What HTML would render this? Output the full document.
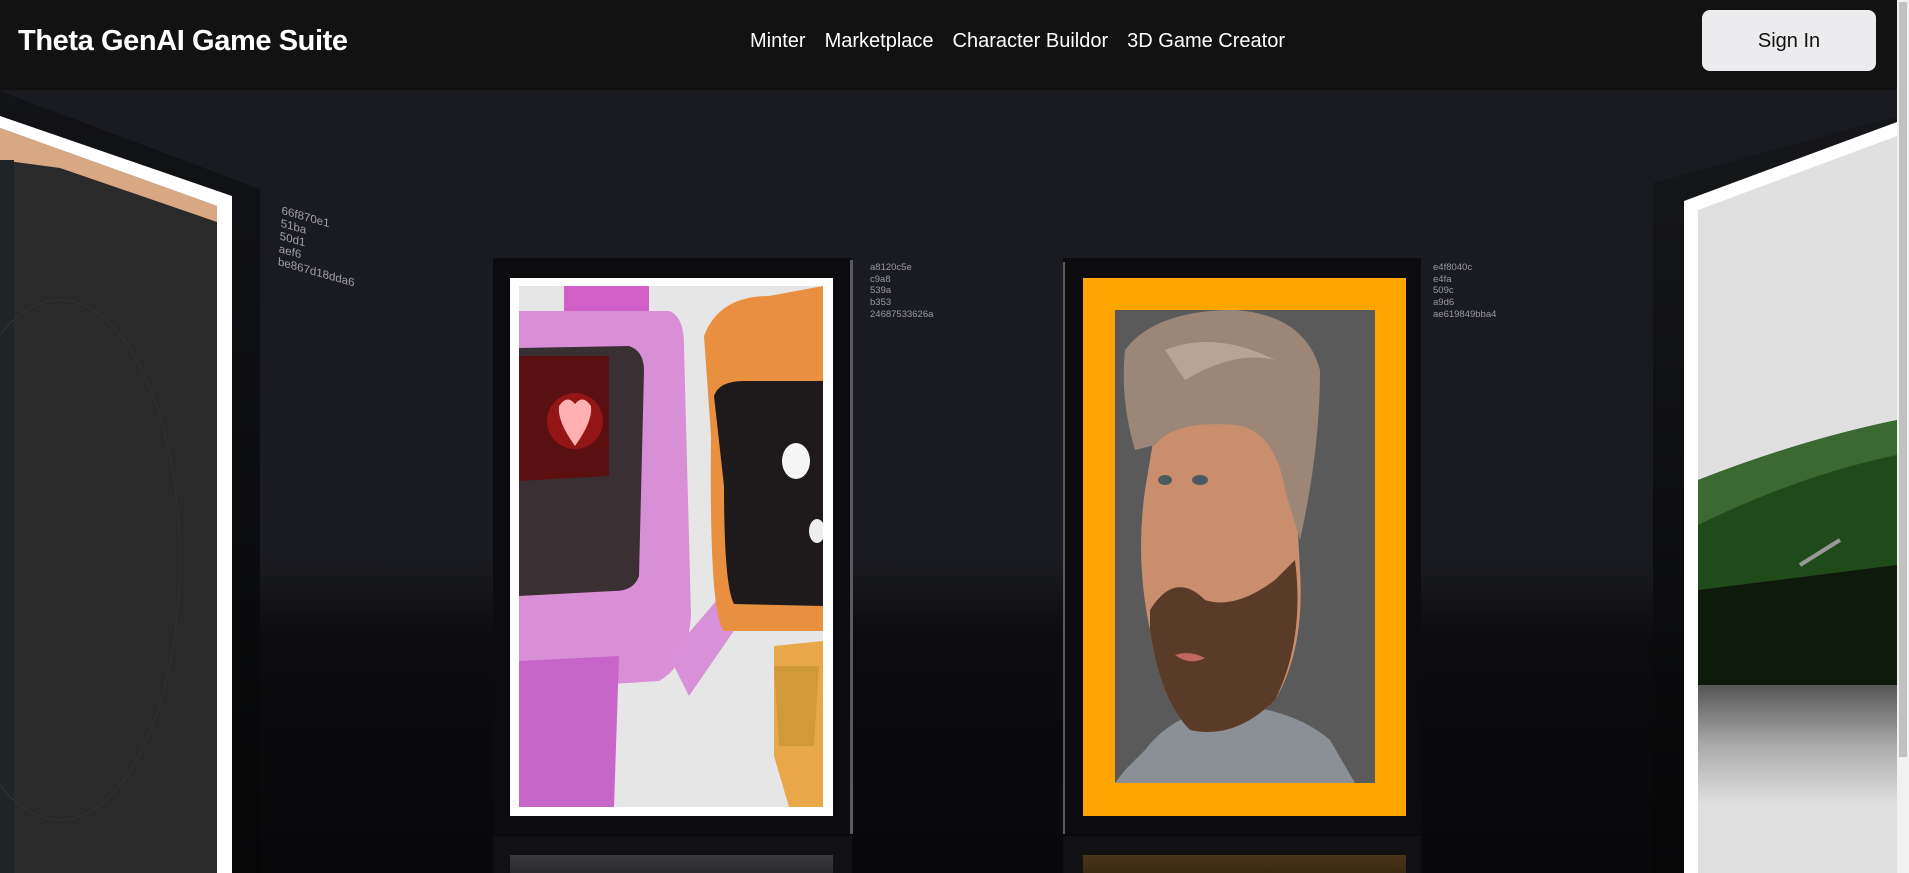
<!DOCTYPE html>
<html><head><meta charset="utf-8"><style>
*{margin:0;padding:0;box-sizing:border-box}
html,body{width:1909px;height:873px;overflow:hidden}
body{position:relative;font-family:"Liberation Sans",sans-serif;background:linear-gradient(#1a1b20 0px,#1a1b20 560px,#0c0c0e 640px,#08080a 873px)}
.nav{position:absolute;left:0;top:0;width:1897px;height:90px;background:#121212}
.title{position:absolute;left:18px;top:25px;color:#fff;font-size:29px;font-weight:bold;letter-spacing:-0.4px}
.links{position:absolute;left:750px;top:30px;color:#fff;font-size:20px;white-space:nowrap}
.links span{margin-right:19px}
.btn{position:absolute;left:1702px;top:10px;width:174px;height:61px;background:#ececee;border-radius:8px;color:#111;font-size:20px;text-align:center;line-height:63px}
.sb{position:absolute;left:1897px;top:0;width:12px;height:873px;background:#f1f1f1}
.sbt{position:absolute;left:1899px;top:2px;width:8px;height:755px;background:#c1c1c1}
.hash{position:absolute;color:#9a9a9e;font-size:9.5px;line-height:11.7px}
.abs{position:absolute}
</style></head><body>
<div class="nav">
<div class="title">Theta GenAI Game Suite</div>
<div class="links"><span>Minter</span><span>Marketplace</span><span>Character Buildor</span><span>3D Game Creator</span></div>
<div class="btn">Sign In</div>
</div>

<!-- left panel -->
<svg class="abs" style="left:0;top:0" width="300" height="873">
<defs><linearGradient id="lf" x1="0" y1="0" x2="0" y2="1"><stop offset="0" stop-color="#121316"/><stop offset="1" stop-color="#060607"/></linearGradient></defs>
<polygon points="0,91 260,189 260,873 0,873" fill="url(#lf)"/>
<polygon points="0,116 232,196 232,873 0,873" fill="#ffffff"/>
<polygon points="0,128 217,206 217,873 0,873" fill="#2a2a2a"/>
<polygon points="0,128 217,206 217,222 60,168 0,160" fill="#d8a885"/>
<rect x="0" y="160" width="14" height="713" fill="#1f2526"/>
<ellipse cx="60" cy="560" rx="120" ry="260" fill="none" stroke="#333" stroke-width="1"/>
</svg>
<div class="hash" style="left:282px;top:205px;font-size:11.5px;line-height:13px;transform:skewY(12deg) rotate(4deg);transform-origin:0 0;color:#a0a0a4">66f870e1<br>51ba<br>50d1<br>aef6<br>be867d18dda6</div>

<!-- card 1 -->
<div class="abs" style="left:493px;top:258px;width:359px;height:576px;background:#0c0c0e"></div>
<div class="abs" style="left:850px;top:260px;width:3px;height:574px;background:#5a5a60"></div>
<div class="abs" style="left:510px;top:278px;width:323px;height:538px;background:#fff"></div>
<svg class="abs" style="left:519px;top:286px" width="304" height="521" viewBox="0 0 304 521">
<rect width="304" height="521" fill="#e6e6e6"/>
<path d="M0,25 L150,25 Q165,30 165,60 L172,330 Q168,380 140,395 L60,400 L0,405Z" fill="#d98fd6"/>
<path d="M45,0 L130,0 L130,25 L45,25Z" fill="#d060c8"/>
<path d="M0,62 L110,60 Q125,65 125,85 L120,290 Q115,305 95,305 L0,310Z" fill="#3a3033"/>
<path d="M0,70 L90,70 L90,190 L0,195Z" fill="#5a1010"/>
<path d="M40,120 q8,-12 16,-2 q8,-10 16,2 q2,15 -16,40 q-18,-25 -16,-40Z" fill="#fff"/>
<circle cx="56" cy="135" r="28" fill="#ff2020" opacity="0.35"/>
<path d="M0,375 L100,370 L95,521 L0,521Z" fill="#c865c8"/>
<path d="M150,370 L210,300 L225,330 L170,410 Z" fill="#d890d8"/>
<path d="M185,50 Q200,10 250,10 L304,0 L304,345 L205,345 Q190,330 192,150Z" fill="#e8903f"/>
<path d="M195,110 Q200,95 225,95 L304,95 L304,320 L215,318 Q205,300 205,200Z" fill="#1e1a1c"/>
<ellipse cx="277" cy="175" rx="14" ry="18" fill="#f5f5f5"/>
<ellipse cx="298" cy="245" rx="8" ry="12" fill="#eee"/>
<path d="M255,360 L304,355 L304,521 L270,521 L255,470Z" fill="#e8a84a"/>
<path d="M255,380 L300,380 L295,460 L260,460Z" fill="#d09a3a"/>
</svg>
<div class="hash" style="left:870px;top:262px">a8120c5e<br>c9a8<br>539a<br>b353<br>24687533626a</div>

<!-- card 2 -->
<div class="abs" style="left:1063px;top:258px;width:358px;height:576px;background:#0c0c0e"></div>
<div class="abs" style="left:1063px;top:262px;width:2px;height:572px;background:#5a5a60"></div>
<div class="abs" style="left:1083px;top:278px;width:323px;height:538px;background:#ffa500"></div>
<svg class="abs" style="left:1115px;top:310px" width="260" height="473" viewBox="0 0 260 473">
<rect width="260" height="473" fill="#5a5a5a"/>
<path d="M30,440 Q60,400 120,395 Q180,400 215,430 L240,473 L0,473 L10,460Z" fill="#8a9096"/>
<path d="M40,120 Q60,95 110,100 Q170,110 180,170 L185,260 Q190,340 160,390 Q120,430 75,420 Q45,390 35,320 Q20,250 30,180Z" fill="#c98e6e"/>
<path d="M35,300 Q60,260 90,290 Q120,300 160,270 L180,250 Q190,330 160,390 Q120,430 75,420 Q45,390 35,320Z" fill="#5a3b28"/>
<path d="M60,345 Q75,340 90,348 Q75,356 60,345Z" fill="#c06a5e"/>
<path d="M10,40 Q40,0 120,0 Q190,5 205,60 Q205,140 185,230 L170,180 Q160,120 120,115 Q60,110 40,135 L20,140 Q5,90 10,40Z" fill="#9c8678"/>
<path d="M50,40 Q100,20 160,50 Q120,40 70,70Z" fill="#b8a496"/>
<ellipse cx="50" cy="170" rx="7" ry="5" fill="#4a5a60"/>
<ellipse cx="85" cy="170" rx="8" ry="5" fill="#4a5a60"/>
</svg>
<div class="hash" style="left:1433px;top:262px">e4f8040c<br>e4fa<br>509c<br>a9d6<br>ae619849bba4</div>

<!-- reflections -->
<div class="abs" style="left:493px;top:836px;width:359px;height:37px;background:#111114"></div>
<div class="abs" style="left:510px;top:855px;width:323px;height:18px;background:linear-gradient(#3a3a3e,#2a2a2e)"></div>
<div class="abs" style="left:1063px;top:836px;width:358px;height:37px;background:#111114"></div>
<div class="abs" style="left:1083px;top:855px;width:323px;height:18px;background:linear-gradient(#4a3418,#3a2a14)"></div>

<!-- right panel -->
<svg class="abs" style="left:1600px;top:0" width="297" height="873">
<defs>
<linearGradient id="rf" x1="0" y1="0" x2="0" y2="1"><stop offset="0" stop-color="#16171a"/><stop offset="1" stop-color="#060607"/></linearGradient>
<linearGradient id="sh" x1="0" y1="0" x2="0" y2="1"><stop offset="0" stop-color="#555"/><stop offset="0.5" stop-color="#aaa"/><stop offset="1" stop-color="#e0e0e0"/></linearGradient>
</defs>
<polygon points="53,183 297,116 297,873 53,873" fill="url(#rf)"/>
<polygon points="84,201 297,122 297,873 84,873" fill="#fff"/>
<polygon points="98,210 297,136 297,873 98,873" fill="#e0e0e0"/>
<path d="M98,480 Q200,440 297,420 L297,685 L98,685Z" fill="#1f4a1a"/>
<path d="M98,480 Q200,440 297,420 L297,455 Q200,475 98,525Z" fill="#3a6a32"/>
<path d="M98,590 L297,565 L297,690 L98,690Z" fill="#0e1a0c"/>
<path d="M200,565 L240,540" stroke="#999" stroke-width="4"/>
<rect x="98" y="685" width="199" height="120" fill="url(#sh)"/>
</svg>

<div class="sb"></div><div class="sbt"></div>
</body></html>
